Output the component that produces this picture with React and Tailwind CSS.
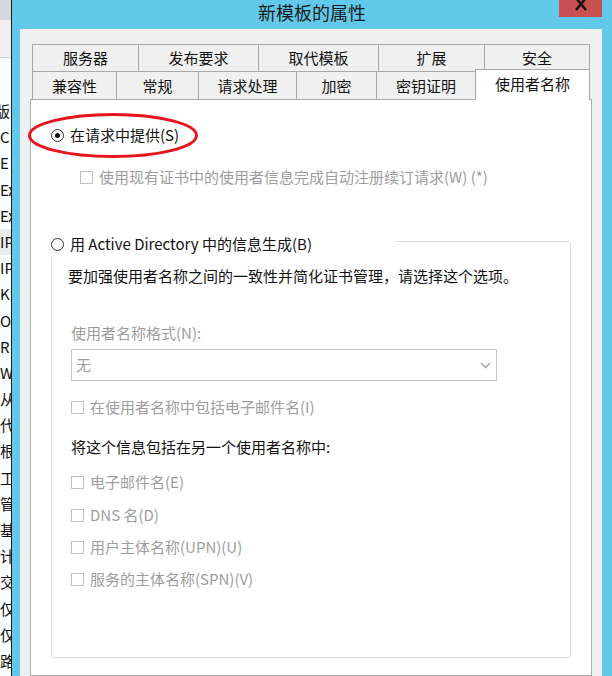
import React from "react";

const row1 = [
  { label: "服务器", w: "w-[106px]" },
  { label: "发布要求", w: "w-[120px]" },
  { label: "取代模板", w: "w-[120px]" },
  { label: "扩展", w: "w-[106px]" },
  { label: "安全", w: "w-[106px]" },
];

const row2 = [
  { label: "兼容性", w: "w-[84px]" },
  { label: "常规", w: "w-[82px]" },
  { label: "请求处理", w: "w-[98px]" },
  { label: "加密", w: "w-[80px]" },
  { label: "密钥证明", w: "w-[99px]" },
];

const bgList = ["版", "C", "E", "Ex", "Ex", "IP", "IP", "K", "O", "R", "W", "从", "代", "根", "工", "管", "基", "计", "交", "仅", "仅", "路"];

function Radio({ checked }) {
  return (
    <span className="flex h-[13px] w-[13px] shrink-0 items-center justify-center rounded-full border border-[#333333] bg-white">
      {checked && <span className="h-[5px] w-[5px] rounded-full bg-[#111111]" />}
    </span>
  );
}

function Check() {
  return <span className="block h-[13px] w-[13px] shrink-0 border border-[#c0c0c0] bg-white" />;
}

function CheckRow({ children, className = "" }) {
  return (
    <div className={`flex h-[20px] items-center gap-[6px] leading-[20px] text-[#9d9d9d] ${className}`}>
      <Check />
      <span>{children}</span>
    </div>
  );
}

export default function App() {
  return (
    <div className="relative flex h-[676px] w-[612px] overflow-hidden bg-white font-['Noto_Sans_CJK_SC',sans-serif] text-[15px] text-[#111111]">
      {/* background window behind the dialog */}
      <div className="flex w-[11px] shrink-0 flex-col overflow-hidden">
        <div className="h-[20px] bg-[#d3d8df]" />
        <div className="h-[38px] border-b border-[#d4d4d4] bg-[#f0f0f0]" />
        <div className="h-[40px] bg-white" />
        {bgList.map((t, i) => (
          <div
            key={i}
            className={`h-[26.2px] whitespace-nowrap leading-[26px] ${i === 0 ? "-ml-[5px]" : ""} ${i === 5 ? "bg-[#ebebeb]" : ""}`}
          >
            {t}
          </div>
        ))}
      </div>

      {/* dialog */}
      <div className="flex flex-1 flex-col border-l border-[#1a1a1a] bg-[#62c9ea]">
        <div className="grid h-[29px] grid-cols-[1fr_auto_1fr] items-start">
          <div />
          <div className="pt-[1px] text-[18px] leading-[22px] text-[#1b1b1b]">新模板的属性</div>
          <div className="flex justify-end pr-[10px]">
            <div className="flex h-[17px] w-[43px] items-start justify-center bg-[#c75050]">
              <svg width="12" height="11" viewBox="0 0 12 11">
                <path d="M1 -2 L11 10 M11 -2 L1 10" stroke="#111" strokeWidth="2.4" fill="none" />
              </svg>
            </div>
          </div>
        </div>

        <div className="ml-[8px] mr-[10px] flex flex-1 flex-col bg-[#f0f0f0] px-[10px] pt-[15px]">
          {/* tabs */}
          <div className="flex h-[27px] pl-[2px]">
            {row1.map((t, i) => (
              <div
                key={t.label}
                className={`flex items-center justify-center border-l border-t border-[#a9a9a9] leading-[20px] ${t.w} ${i === row1.length - 1 ? "border-r" : ""}`}
              >
                {t.label}
              </div>
            ))}
          </div>
          <div className="flex h-[28px] items-end pl-[2px]">
            {row2.map((t) => (
              <div
                key={t.label}
                className={`flex h-[28px] items-center justify-center border-l border-t border-[#a9a9a9] leading-[20px] ${t.w}`}
              >
                {t.label}
              </div>
            ))}
            <div className="relative z-10 -mb-px flex h-[31px] w-[115px] items-start justify-center border-x border-t border-[#a9a9a9] bg-white pt-[4px] leading-[20px]">
              使用者名称
            </div>
          </div>

          {/* panel */}
          <div className="flex flex-1 flex-col border border-[#adadad] bg-white">
            <div className="ml-[20px] mt-[25px] flex h-[20px] items-center gap-[6px] leading-[20px]">
              <Radio checked />
              <span>在请求中提供(S)</span>
            </div>
            <CheckRow className="ml-[49px] mt-[22px]">使用现有证书中的使用者信息完成自动注册续订请求(W) (*)</CheckRow>

            <div className="ml-[15px] mt-[44px] flex flex-col">
              <div className="relative z-10 flex h-[26px] w-[350px] items-center gap-[6px] bg-white pl-[5px] leading-[20px]">
                <Radio />
                <span>用 Active Directory 中的信息生成(B)</span>
              </div>
              <div className="-mt-[16px] ml-[5px] flex h-[417px] w-[520px] flex-col rounded-[3px] border border-[#dcdcdc] pl-[16px]">
                <div className="mt-[24px] h-[20px] leading-[20px]">
                  要加强使用者名称之间的一致性并简化证书管理，请选择这个选项。
                </div>
                <div className="ml-[3px] mt-[37px] h-[20px] leading-[20px] text-[#9d9d9d]">使用者名称格式(N):</div>
                <div className="ml-[3px] mt-[6px] flex h-[32px] w-[426px] items-center justify-between border border-[#c3c3c3] pl-[4px] pr-[5px] text-[#9d9d9d]">
                  <span>无</span>
                  <svg width="11" height="7" viewBox="0 0 11 7">
                    <path d="M1 1 L5.5 5.5 L10 1" stroke="#a8a8a8" strokeWidth="1.6" fill="none" />
                  </svg>
                </div>
                <CheckRow className="ml-[3px] mt-[16px]">在使用者名称中包括电子邮件名(I)</CheckRow>
                <div className="ml-[3px] mt-[20px] h-[20px] leading-[20px]">将这个信息包括在另一个使用者名称中:</div>
                <CheckRow className="ml-[3px] mt-[15px]">电子邮件名(E)</CheckRow>
                <CheckRow className="ml-[3px] mt-[13px]">DNS 名(D)</CheckRow>
                <CheckRow className="ml-[3px] mt-[12px]">用户主体名称(UPN)(U)</CheckRow>
                <CheckRow className="ml-[3px] mt-[12px]">服务的主体名称(SPN)(V)</CheckRow>
              </div>
            </div>
          </div>
        </div>
      </div>

      {/* red annotation around the first option */}
      <svg className="pointer-events-none absolute left-[27px] top-[111px]" width="174" height="50" viewBox="0 0 174 50">
        <ellipse cx="86" cy="24.5" rx="83.5" ry="21" stroke="#e8141c" strokeWidth="3" fill="none" />
      </svg>
    </div>
  );
}
